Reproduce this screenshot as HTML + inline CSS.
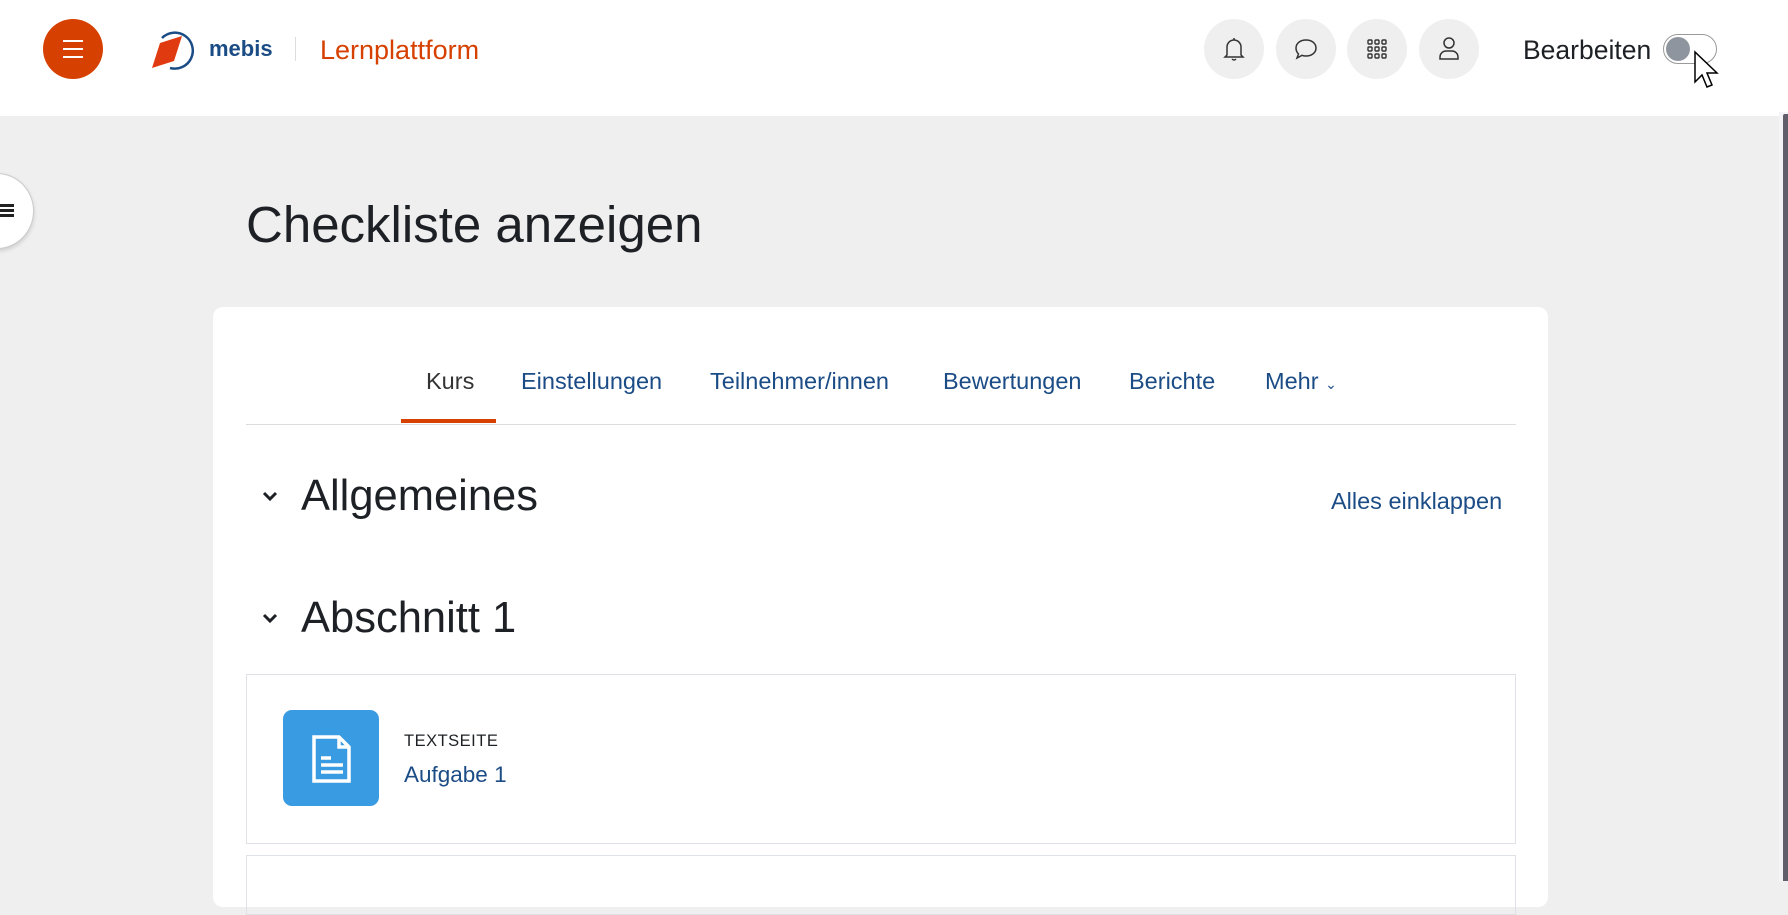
<!DOCTYPE html>
<html><head><meta charset="utf-8"><style>
*{margin:0;padding:0;box-sizing:border-box}
body{width:1788px;height:881px;overflow:hidden;background:#efefef;font-family:"Liberation Sans",sans-serif;position:relative;color:#1d2125}
.a{position:absolute}
#hdr{left:0;top:0;width:1788px;height:116px;background:#fff}
.circ{position:absolute;width:60px;height:60px;border-radius:50%;background:#efefef;top:19px;display:flex;align-items:center;justify-content:center}
.nav{position:absolute;top:368px;font-size:23.5px;color:#1b4c86}
.blue{color:#1b4c86}
</style></head><body>
<div id="hdr" class="a">
  <div class="a" style="left:43px;top:19px;width:60px;height:60px;border-radius:50%;background:#d64000">
    <div class="a" style="left:20px;top:21px;width:20px;height:2px;background:#fff"></div>
    <div class="a" style="left:20px;top:29px;width:20px;height:2px;background:#fff"></div>
    <div class="a" style="left:20px;top:37px;width:20px;height:2px;background:#fff"></div>
  </div>
  <svg class="a" style="left:148px;top:26px" width="50" height="46" viewBox="0 0 50 46">
    <path d="M14 12 A18 18 0 1 1 22 42" fill="none" stroke="#1b4c86" stroke-width="2.5"/>
    <path d="M4 42 L12 17 L34 10 L26 35 Z" fill="#e03a10"/>
  </svg>
  <div class="a" style="left:209px;top:36px;font-size:22px;font-weight:bold;color:#1b4c86">mebis</div>
  <div class="a" style="left:295px;top:37px;width:1px;height:24px;background:#ddd"></div>
  <div class="a" style="left:320px;top:35px;font-size:27px;color:#d64000">Lernplattform</div>
  <div class="circ" style="left:1204px"><svg width="24" height="26" viewBox="0 0 24 26"><path d="M5 19V11a7 7 0 0 1 14 0v8l2 2H3z M12 2v2 M10 23q2 2 4 0" fill="none" stroke="#333" stroke-width="1.5"/></svg></div>
  <div class="circ" style="left:1276px"><svg width="26" height="24" viewBox="0 0 26 24"><path d="M13 3c6 0 10 3.5 10 8s-4 8-10 8c-1.5 0-3-.3-4-.7L4 21l1.5-4C4 15.5 3 13.5 3 11c0-4.5 4-8 10-8z" fill="none" stroke="#333" stroke-width="1.5"/></svg></div>
  <div class="circ" style="left:1347px"><svg width="22" height="22" viewBox="0 0 22 22" fill="none" stroke="#333" stroke-width="1.4"><rect x="2" y="2" width="4" height="4" rx="1"/><rect x="9" y="2" width="4" height="4" rx="1"/><rect x="16" y="2" width="4" height="4" rx="1"/><rect x="2" y="9" width="4" height="4" rx="1"/><rect x="9" y="9" width="4" height="4" rx="1"/><rect x="16" y="9" width="4" height="4" rx="1"/><rect x="2" y="16" width="4" height="4" rx="1"/><rect x="9" y="16" width="4" height="4" rx="1"/><rect x="16" y="16" width="4" height="4" rx="1"/></svg></div>
  <div class="circ" style="left:1419px"><svg width="24" height="26" viewBox="0 0 24 26" fill="none" stroke="#333" stroke-width="1.5"><circle cx="12" cy="7" r="5"/><path d="M3 23v-2a6 6 0 0 1 6-6h6a6 6 0 0 1 6 6v2z"/></svg></div>
  <div class="a" style="left:1523px;top:35px;font-size:26.5px;color:#1d2125">Bearbeiten</div>
  <div class="a" style="left:1663px;top:34px;width:54px;height:30px;border-radius:15px;border:1px solid #999;background:#fff">
    <div class="a" style="left:2px;top:2px;width:24px;height:24px;border-radius:50%;background:#8f959e"></div>
  </div>
  <svg class="a" style="left:1693px;top:50px" width="28" height="42" viewBox="0 0 28 42"><path d="M2 2 L2 32 L9 25 L14 37 L19 35 L14 23 L24 23 Z" fill="#fff" stroke="#000" stroke-width="1.5"/></svg>
</div>
<div class="a" style="left:1779px;top:112px;width:9px;height:769px;background:#f4f4f6"></div>
<div class="a" style="left:1783px;top:114px;width:5px;height:767px;background:#5f5e6a;border-radius:2px 0 0 0"></div>
<div class="a" style="left:-40px;top:173px;width:74px;height:76px;border-radius:50%;background:#fff;border:1px solid #ccc;box-shadow:0 2px 4px rgba(0,0,0,.15)">
  <div class="a" style="left:38px;top:30px;width:15px;height:3px;background:#222"></div>
  <div class="a" style="left:38px;top:35px;width:15px;height:3px;background:#222"></div>
  <div class="a" style="left:38px;top:40px;width:15px;height:3px;background:#222"></div>
</div>
<div class="a" style="left:246px;top:195px;font-size:51px;color:#1d2125">Checkliste anzeigen</div>
<div class="a" style="left:213px;top:307px;width:1335px;height:600px;background:#fff;border-radius:10px"></div>
<div class="nav" style="left:426px;color:#333">Kurs</div>
<div class="nav" style="left:521px">Einstellungen</div>
<div class="nav" style="left:710px">Teilnehmer/innen</div>
<div class="nav" style="left:943px">Bewertungen</div>
<div class="nav" style="left:1129px">Berichte</div>
<div class="nav" style="left:1265px">Mehr <span style="font-size:14px">&#8964;</span></div>
<div class="a" style="left:246px;top:424px;width:1270px;height:1px;background:#ddd"></div>
<div class="a" style="left:401px;top:419px;width:95px;height:4px;background:#d64000"></div>
<svg class="a" style="left:261px;top:490px" width="18" height="12" viewBox="0 0 18 12"><path d="M3 3l6 6 6-6" fill="none" stroke="#1d2125" stroke-width="3"/></svg>
<div class="a" style="left:301px;top:472px;font-size:43.5px">Allgemeines</div>
<div class="a blue" style="left:1331px;top:488px;font-size:23.5px">Alles einklappen</div>
<svg class="a" style="left:261px;top:612px" width="18" height="12" viewBox="0 0 18 12"><path d="M3 3l6 6 6-6" fill="none" stroke="#1d2125" stroke-width="3"/></svg>
<div class="a" style="left:301px;top:594px;font-size:43.5px">Abschnitt 1</div>
<div class="a" style="left:246px;top:674px;width:1270px;height:170px;border:1px solid #dee2e6"></div>
<div class="a" style="left:283px;top:710px;width:96px;height:96px;border-radius:9px;background:#399be2">
  <svg class="a" style="left:28px;top:24px" width="42" height="50" viewBox="0 0 42 50" fill="none" stroke="#fff" stroke-width="3.5"><path d="M3 3h25l10 10v34H3z M28 3v10h10"/><path d="M10 24h10 M10 31h22 M10 38h22"/></svg>
</div>
<div class="a" style="left:404px;top:732px;font-size:16.5px;letter-spacing:.5px">TEXTSEITE</div>
<div class="a blue" style="left:404px;top:762px;font-size:22.5px">Aufgabe 1</div>
<div class="a" style="left:246px;top:855px;width:1270px;height:60px;border:1px solid #dee2e6"></div>
</body></html>
